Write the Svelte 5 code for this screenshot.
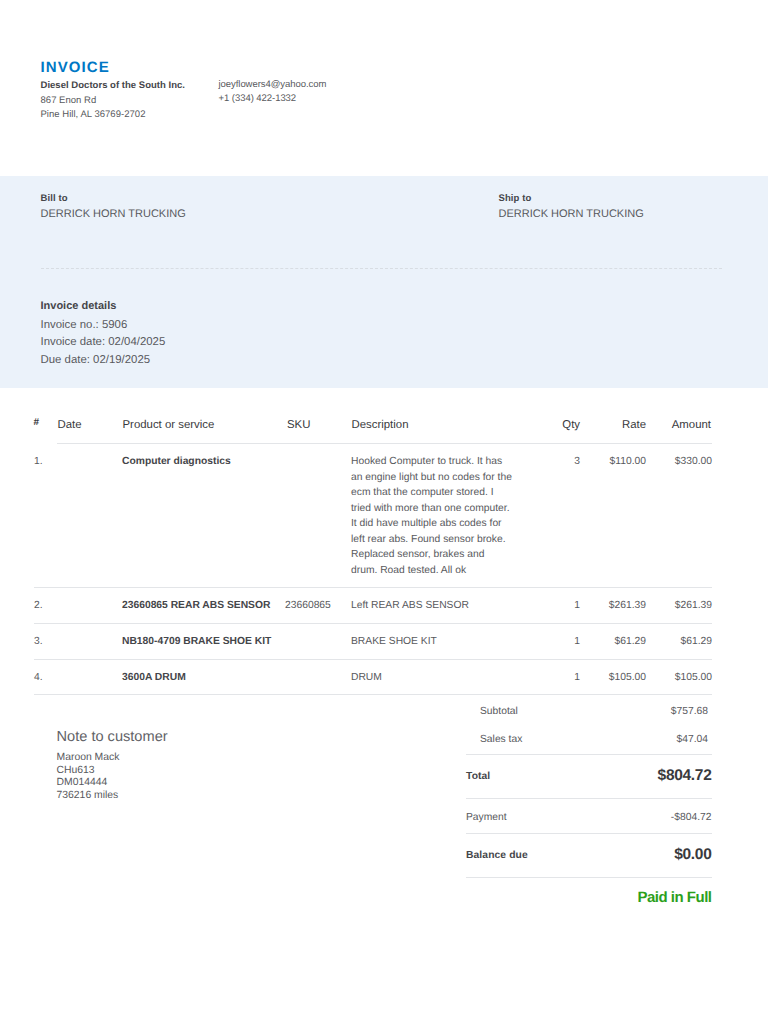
<script>
  const rows = [
    { n: '1.', name: 'Computer diagnostics', sku: '', desc: ['Hooked Computer to truck. It has', 'an engine light but no codes for the', 'ecm that the computer stored. I', 'tried with more than one computer.', 'It did have multiple abs codes for', 'left rear abs. Found sensor broke.', 'Replaced sensor, brakes and', 'drum. Road tested. All ok'], qty: '3', rate: '$110.00', amount: '$330.00' },
    { n: '2.', name: '23660865 REAR ABS SENSOR', sku: '23660865', desc: ['Left REAR ABS SENSOR'], qty: '1', rate: '$261.39', amount: '$261.39' },
    { n: '3.', name: 'NB180-4709 BRAKE SHOE KIT', sku: '', desc: ['BRAKE SHOE KIT'], qty: '1', rate: '$61.29', amount: '$61.29' },
    { n: '4.', name: '3600A DRUM', sku: '', desc: ['DRUM'], qty: '1', rate: '$105.00', amount: '$105.00' }
  ];
</script>

<div class="page">
  <header class="top">
    <h1>INVOICE</h1>
    <div class="company">
      <div class="addr">
        <strong>Diesel Doctors of the South Inc.</strong>
        <span>867 Enon Rd</span>
        <span>Pine Hill, AL 36769-2702</span>
      </div>
      <div class="contact">
        <span>joeyflowers4@yahoo.com</span>
        <span>+1 (334) 422-1332</span>
      </div>
    </div>
  </header>

  <section class="band">
    <div class="parties">
      <div class="party">
        <h2>Bill to</h2>
        <p>DERRICK HORN TRUCKING</p>
      </div>
      <div class="party">
        <h2>Ship to</h2>
        <p>DERRICK HORN TRUCKING</p>
      </div>
    </div>
    <div class="details">
      <h3>Invoice details</h3>
      <p>Invoice no.: 5906</p>
      <p>Invoice date: 02/04/2025</p>
      <p>Due date: 02/19/2025</p>
    </div>
  </section>

  <section class="table">
    <div class="row head">
      <b class="hash">#</b>
      <span class="hline">Date</span>
      <span class="hline">Product or service</span>
      <span class="hline sku">SKU</span>
      <span class="hline">Description</span>
      <span class="hline right">Qty</span>
      <span class="hline right">Rate</span>
      <span class="hline right amt">Amount</span>
    </div>
    {#each rows as r}
      <div class="row item">
        <span>{r.n}</span>
        <span></span>
        <strong>{r.name}</strong>
        <span>{r.sku}</span>
        <span class="desc">{#each r.desc as line}<span class="line">{line}</span>{/each}</span>
        <span class="right">{r.qty}</span>
        <span class="right">{r.rate}</span>
        <span class="right">{r.amount}</span>
      </div>
    {/each}
  </section>

  <section class="bottom">
    <div class="note">
      <h3>Note to customer</h3>
      <p>Maroon Mack</p>
      <p>CHu613</p>
      <p>DM014444</p>
      <p>736216 miles</p>
    </div>
    <div class="totals">
      <div class="sub"><span>Subtotal</span><span>$757.68</span></div>
      <div class="sub tax"><span>Sales tax</span><span>$47.04</span></div>
      <div class="big total"><b>Total</b><strong>$804.72</strong></div>
      <div class="pay"><span>Payment</span><span>-$804.72</span></div>
      <div class="big balance"><b>Balance due</b><strong>$0.00</strong></div>
      <div class="paid">Paid in Full</div>
    </div>
  </section>
</div>

<style>
  :global(body) {
    margin: 0;
    background: #fff;
    font-family: "Liberation Sans", Arial, sans-serif;
    color: #58595d;
    text-rendering: geometricPrecision;
  }
  .page { width: 768px; height: 1024px; overflow: hidden; }
  h1, h2, h3, p { margin: 0; font-weight: normal; font-size: inherit; }

  .top { height: 176px; box-sizing: border-box; padding: 59px 0 0 40.5px; }
  h1 { font-size: 15px; line-height: 18px; font-weight: 700; letter-spacing: 1.1px; color: #0077c5; }
  .company { display: flex; font-size: 9.5px; line-height: 14.5px; letter-spacing: 0.03px; }
  .addr { width: 178px; display: flex; flex-direction: column; padding-top: 2px; }
  .addr strong { color: #45464a; }
  .contact { display: flex; flex-direction: column; padding-top: 0.5px; letter-spacing: -0.05px; }

  .band { height: 212px; box-sizing: border-box; background: #ebf2fa; padding: 16px 0 0 40.5px; }
  .parties { display: flex; height: 76px; width: 681px; border-bottom: 1px dashed #d8dde3; }
  .party:first-child { width: 458px; }
  .party h2 { font-size: 9.5px; line-height: 13px; font-weight: 700; letter-spacing: 0.1px; color: #45464a; }
  .party p { font-size: 11px; line-height: 18px; }
  .details { padding-top: 28px; font-size: 11.4px; line-height: 17.7px; }
  .details h3 { font-size: 11px; font-weight: 700; color: #45464a; line-height: 19px; margin-bottom: 0.7px; }

  .table { padding: 0 56px 0 34px; }
  .row { display: grid; grid-template-columns: 23px 65px 163px 66px 177px 52px 66px 66px; }
  .head { height: 56px; font-size: 11.4px; color: #393a3d; }
  .head .hline { padding-top: 29px; border-bottom: 1px solid #e3e5e8; line-height: 17px; padding-left: 0.5px; box-sizing: border-box; }
  .head .sku { padding-left: 2px; }
  .hash { font-size: 10px; padding-top: 28px; line-height: 14px; margin-left: -0.5px; }
  .amt { padding-right: 1px; }
  .item { font-size: 10.3px; line-height: 15.5px; border-bottom: 1px solid #e3e5e8; padding: 10px 0 9.3px; }
  .item:nth-child(2) { padding-bottom: 9px; }
  .item strong { color: #45464a; white-space: nowrap; }
  .line { display: block; white-space: nowrap; }
  .right { text-align: right; }

  .bottom { display: flex; justify-content: space-between; padding: 0 56px 0 56.5px; }
  .note { padding-top: 34px; font-size: 10.4px; line-height: 12.5px; }
  .note h3 { font-size: 14.6px; line-height: 17px; margin-bottom: 6px; color: #626367; }
  .totals { width: 246px; font-size: 10.3px; line-height: 14px; }
  .sub { display: flex; justify-content: space-between; padding: 10px 4px 4px 14px; }
  .tax { border-bottom: 1px solid #e3e5e8; padding-bottom: 7px; }
  .big { display: flex; justify-content: space-between; align-items: center; border-bottom: 1px solid #e3e5e8; padding: 0 0.5px 0 0; box-sizing: border-box; }
  .big b { color: #45464a; font-size: 10.3px; letter-spacing: 0.1px; }
  .big strong { font-size: 15.5px; letter-spacing: -0.3px; color: #393a3d; margin-top: -2px; }
  .total { height: 44px; }
  .balance { height: 44px; }
  .pay { display: flex; justify-content: space-between; height: 35px; box-sizing: border-box; padding: 4px 0.5px 0 0; align-items: center; border-bottom: 1px solid #e3e5e8; }
  .paid { text-align: right; color: #2ca01c; font-weight: 700; font-size: 15px; line-height: 20px; padding: 10px 0.5px 0 0; letter-spacing: -0.5px; }
</style>
